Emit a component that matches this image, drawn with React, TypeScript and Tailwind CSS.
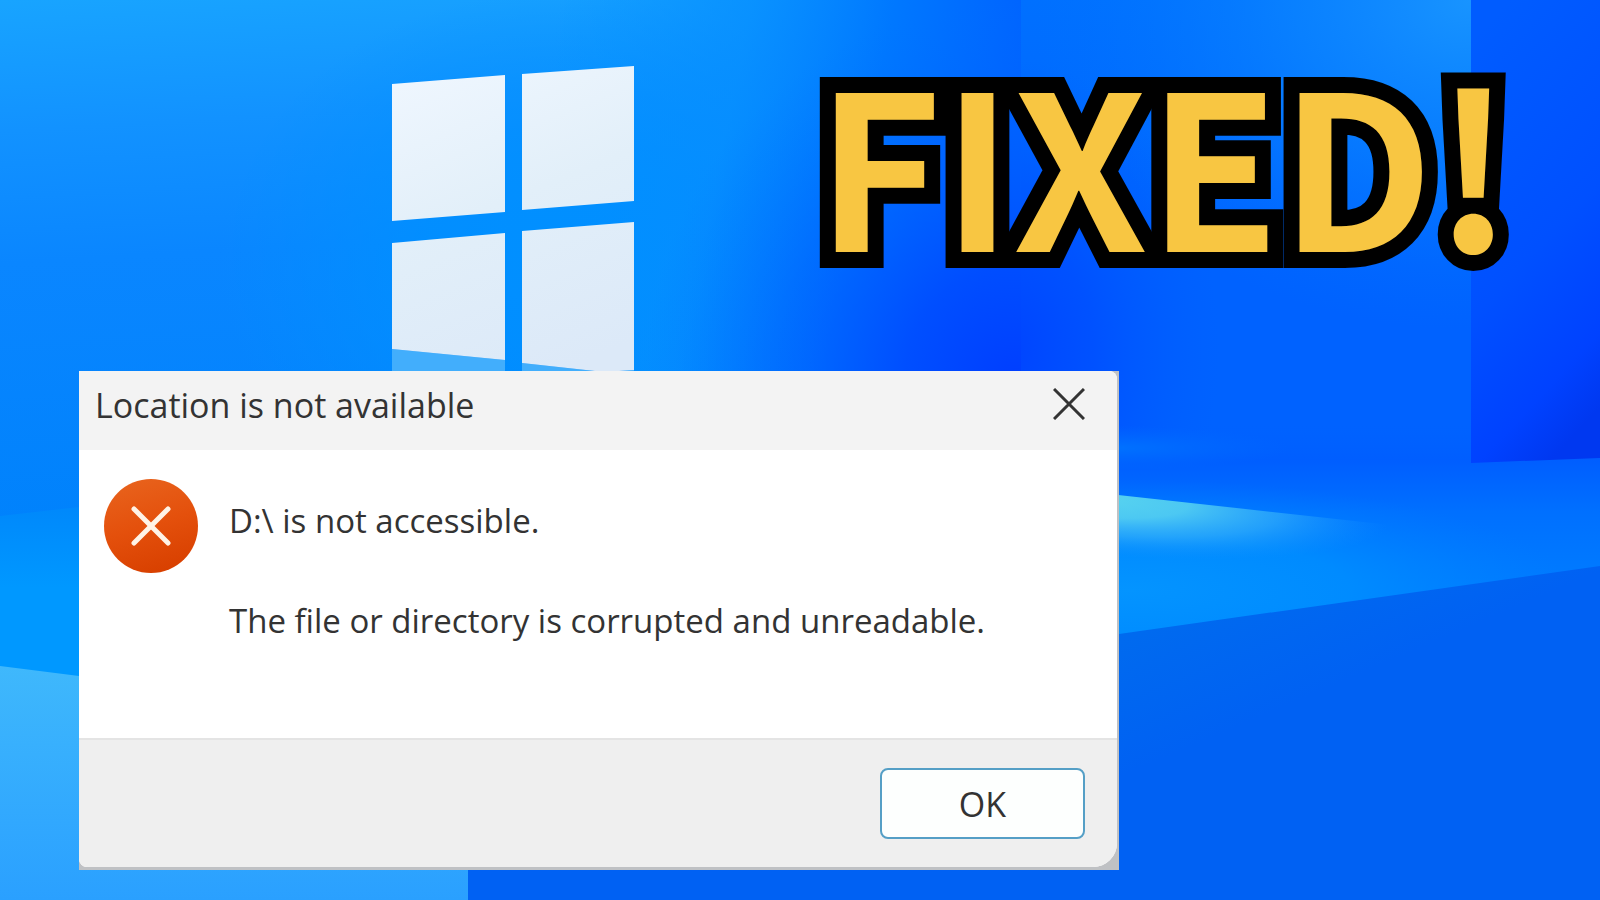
const panes = [
  "392,84 505,75 505,212 392,221",
  "522,74 634,66 634,201 522,210",
  "392,243 505,233 505,360 392,349",
  "522,231 634,222 634,370 604,372 522,363",
];

function Wallpaper() {
  return (
    <svg
      className="absolute inset-0 -z-10 h-full w-full"
      viewBox="0 0 1600 900"
      preserveAspectRatio="xMidYMid slice"
      aria-hidden="true"
    >
      <defs>
        <linearGradient id="wall" x1="0" y1="0" x2="0.12" y2="1">
          <stop offset="0" stopColor="#18a4ff" />
          <stop offset="0.25" stopColor="#1292ff" />
          <stop offset="0.5" stopColor="#0a86ff" />
          <stop offset="1" stopColor="#0082fc" />
        </linearGradient>
        <radialGradient id="glow" gradientUnits="userSpaceOnUse" cx="0" cy="0" r="1" gradientTransform="translate(560 260) scale(340 270)">
          <stop offset="0" stopColor="#0090ff" />
          <stop offset="0.4" stopColor="#0090ff" stopOpacity="0.8" />
          <stop offset="1" stopColor="#0090ff" stopOpacity="0" />
        </radialGradient>
        <linearGradient id="shade" gradientUnits="userSpaceOnUse" x1="560" y1="0" x2="1021" y2="90">
          <stop offset="0" stopColor="#0090ff" stopOpacity="0" />
          <stop offset="0.4" stopColor="#058eff" stopOpacity="0.75" />
          <stop offset="0.7" stopColor="#0078ff" />
          <stop offset="1" stopColor="#0062ff" />
        </linearGradient>
        <radialGradient id="deep" gradientUnits="userSpaceOnUse" cx="0" cy="0" r="1" gradientTransform="translate(1015 380) scale(370 380)">
          <stop offset="0" stopColor="#003eff" />
          <stop offset="0.3" stopColor="#004aff" stopOpacity="0.85" />
          <stop offset="0.65" stopColor="#0060ff" stopOpacity="0.5" />
          <stop offset="1" stopColor="#0074ff" stopOpacity="0" />
        </radialGradient>
        <linearGradient id="back" x1="0" y1="0" x2="0" y2="1">
          <stop offset="0" stopColor="#0070ff" />
          <stop offset="0.4" stopColor="#0062ff" />
          <stop offset="1" stopColor="#0062ff" />
        </linearGradient>
        <radialGradient id="backTop" gradientUnits="userSpaceOnUse" cx="0" cy="0" r="1" gradientTransform="translate(1471 0) scale(440 330)">
          <stop offset="0" stopColor="#1894ff" />
          <stop offset="0.4" stopColor="#0c86ff" stopOpacity="0.75" />
          <stop offset="1" stopColor="#0074ff" stopOpacity="0" />
        </radialGradient>
        <radialGradient id="backLow" gradientUnits="userSpaceOnUse" cx="0" cy="0" r="1" gradientTransform="translate(1010 350) scale(210 290)">
          <stop offset="0" stopColor="#0044ff" />
          <stop offset="0.4" stopColor="#004cff" stopOpacity="0.75" />
          <stop offset="1" stopColor="#005aff" stopOpacity="0" />
        </radialGradient>
        <linearGradient id="side" x1="0.3" y1="0" x2="0.6" y2="1">
          <stop offset="0" stopColor="#005cff" />
          <stop offset="0.55" stopColor="#0050ff" />
          <stop offset="0.85" stopColor="#0042ff" />
          <stop offset="1" stopColor="#0038f0" />
        </linearGradient>
        <linearGradient id="floor" gradientUnits="userSpaceOnUse" x1="0" y1="425" x2="0" y2="600">
          <stop offset="0" stopColor="#0060ff" stopOpacity="0" />
          <stop offset="0.2" stopColor="#005eff" />
          <stop offset="0.5" stopColor="#0070ff" />
          <stop offset="1" stopColor="#007eff" />
        </linearGradient>
        <radialGradient id="haze" gradientUnits="userSpaceOnUse" cx="0" cy="0" r="1" gradientTransform="translate(1110 448) scale(180 22)">
          <stop offset="0" stopColor="#0072ff" />
          <stop offset="1" stopColor="#0068ff" stopOpacity="0" />
        </radialGradient>
        <radialGradient id="floorGlow" gradientUnits="userSpaceOnUse" cx="0" cy="0" r="1" gradientTransform="translate(1130 590) scale(440 110)">
          <stop offset="0" stopColor="#0494ff" />
          <stop offset="0.5" stopColor="#008eff" stopOpacity="0.85" />
          <stop offset="1" stopColor="#0080ff" stopOpacity="0" />
        </radialGradient>
        <radialGradient id="beam" gradientUnits="userSpaceOnUse" cx="0" cy="0" r="1" gradientTransform="translate(1080 496) rotate(5) scale(310 58)">
          <stop offset="0" stopColor="#5ad6ee" />
          <stop offset="0.35" stopColor="#50ccf2" stopOpacity="0.95" />
          <stop offset="0.65" stopColor="#34b0fa" stopOpacity="0.65" />
          <stop offset="1" stopColor="#1090ff" stopOpacity="0" />
        </radialGradient>
        <linearGradient id="ramp" gradientUnits="userSpaceOnUse" x1="1100" y1="620" x2="1160" y2="760">
          <stop offset="0" stopColor="#006cee" />
          <stop offset="1" stopColor="#0061f3" />
        </linearGradient>
        <linearGradient id="leftFloor" gradientUnits="userSpaceOnUse" x1="0" y1="505" x2="0" y2="670">
          <stop offset="0" stopColor="#0088fb" />
          <stop offset="0.5" stopColor="#0098ff" />
          <stop offset="1" stopColor="#0098ff" />
        </linearGradient>
        <linearGradient id="leftRamp" x1="0" y1="0" x2="0" y2="1">
          <stop offset="0" stopColor="#3fb8fc" />
          <stop offset="1" stopColor="#2aa0ff" />
        </linearGradient>
        <linearGradient id="pane" gradientUnits="userSpaceOnUse" x1="440" y1="70" x2="560" y2="370">
          <stop offset="0" stopColor="#eef6fe" />
          <stop offset="0.45" stopColor="#e2eff9" />
          <stop offset="1" stopColor="#dce9f8" />
        </linearGradient>
      </defs>

      {/* Walls */}
      <rect width="1022" height="520" fill="url(#wall)" />
      <rect width="1022" height="520" fill="url(#glow)" />
      <rect x="540" width="482" height="520" fill="url(#shade)" />
      <rect x="600" width="422" height="520" fill="url(#deep)" />
      <rect x="1021" width="579" height="660" fill="url(#back)" />
      <rect x="1021" width="451" height="470" fill="url(#backTop)" />
      <rect x="1021" width="451" height="470" fill="url(#backLow)" />

      {/* Floor */}
      <rect x="1021" y="425" width="579" height="235" fill="url(#floor)" />
      <rect x="1021" y="425" width="300" height="60" fill="url(#haze)" />
      <polygon points="1471,0 1600,0 1600,458 1471,463" fill="url(#side)" />
      <rect x="1021" y="480" width="579" height="180" fill="url(#floorGlow)" />
      <polygon points="1100,493 1400,526 1400,580 1100,580" fill="url(#beam)" />
      <polygon points="460,700 1119,634 1600,566 1600,900 460,900" fill="url(#ramp)" />
      <rect x="460" y="800" width="640" height="100" fill="#0061f3" />
      <polygon points="0,516 79,507 468,500 468,900 0,900" fill="url(#leftFloor)" />
      <polygon points="0,666 79,676 468,720 468,900 0,900" fill="url(#leftRamp)" />

      {/* Window logo */}
      <polygon points="392,349 505,360 505,400 392,400" fill="#42aefc" />
      <polygon points="522,363 604,372 634,370 634,400 522,400" fill="#42aefc" />
      {panes.map((points) => (
        <polygon key={points} points={points} fill="url(#pane)" />
      ))}
    </svg>
  );
}

function ErrorIcon() {
  return (
    <svg className="size-24 shrink-0" viewBox="0 0 96 96" aria-hidden="true">
      <defs>
        <linearGradient id="err" x1="0.3" y1="0" x2="0.6" y2="1">
          <stop offset="0" stopColor="#e8621c" />
          <stop offset="0.5" stopColor="#e4500c" />
          <stop offset="1" stopColor="#d84000" />
        </linearGradient>
      </defs>
      <circle cx="48" cy="48" r="47" fill="url(#err)" />
      <path d="M31 31 65 65M65 31 31 65" stroke="#fff3e6" strokeWidth="5" strokeLinecap="round" />
    </svg>
  );
}

function ErrorDialog() {
  return (
    <section
      role="dialog"
      aria-labelledby="dialog-title"
      className="w-full max-w-[1040px] bg-[#bfc1c4] pr-[2px] pb-[3px] text-[34px] leading-[50px] text-[#333]"
    >
      <div className="overflow-hidden rounded-tr-lg rounded-br-3xl rounded-bl-lg bg-white">
        <header className="flex items-start justify-between bg-[#f3f3f3] pt-[9px] pr-8 pb-5 pl-4">
          <h2 id="dialog-title">Location is not available</h2>
          <button type="button" aria-label="Close" className="mt-2">
            <svg className="size-8" viewBox="0 0 32 32" fill="none" aria-hidden="true">
              <path d="M1 1 31 31M31 1 1 31" stroke="#333" strokeWidth="3" />
            </svg>
          </button>
        </header>

        <div className="flex gap-[30px] px-6 pt-7 pb-[92px]">
          <ErrorIcon />
          <div className="flex flex-col gap-[50px] pt-[18px] text-[33px]">
            <p>D:\ is not accessible.</p>
            <p>The file or directory is corrupted and unreadable.</p>
          </div>
        </div>

        <footer className="flex justify-end border-t-2 border-[#e4e4e4] bg-[#efefef] pt-7 pr-8 pb-7">
          <button
            type="button"
            className="h-[71px] w-[205px] rounded-lg border-2 border-[#559fc6] bg-[#fdfffe]"
          >
            OK
          </button>
        </footer>
      </div>
    </section>
  );
}

export default function App() {
  return (
    <main className="relative isolate flex min-h-screen flex-col overflow-hidden bg-[#0062f4] px-[79px] pt-[9px] font-['Open_Sans',sans-serif]">
      <Wallpaper />
      <h1 className="self-end pr-2 font-['Noto_Sans_CJK_JP',sans-serif] text-[215px] leading-[300px] font-bold text-[#f8c642] [-webkit-text-stroke:32px_#000] [paint-order:stroke_fill]">
        FIXED!
      </h1>
      <div className="mt-[62px]">
        <ErrorDialog />
      </div>
    </main>
  );
}
